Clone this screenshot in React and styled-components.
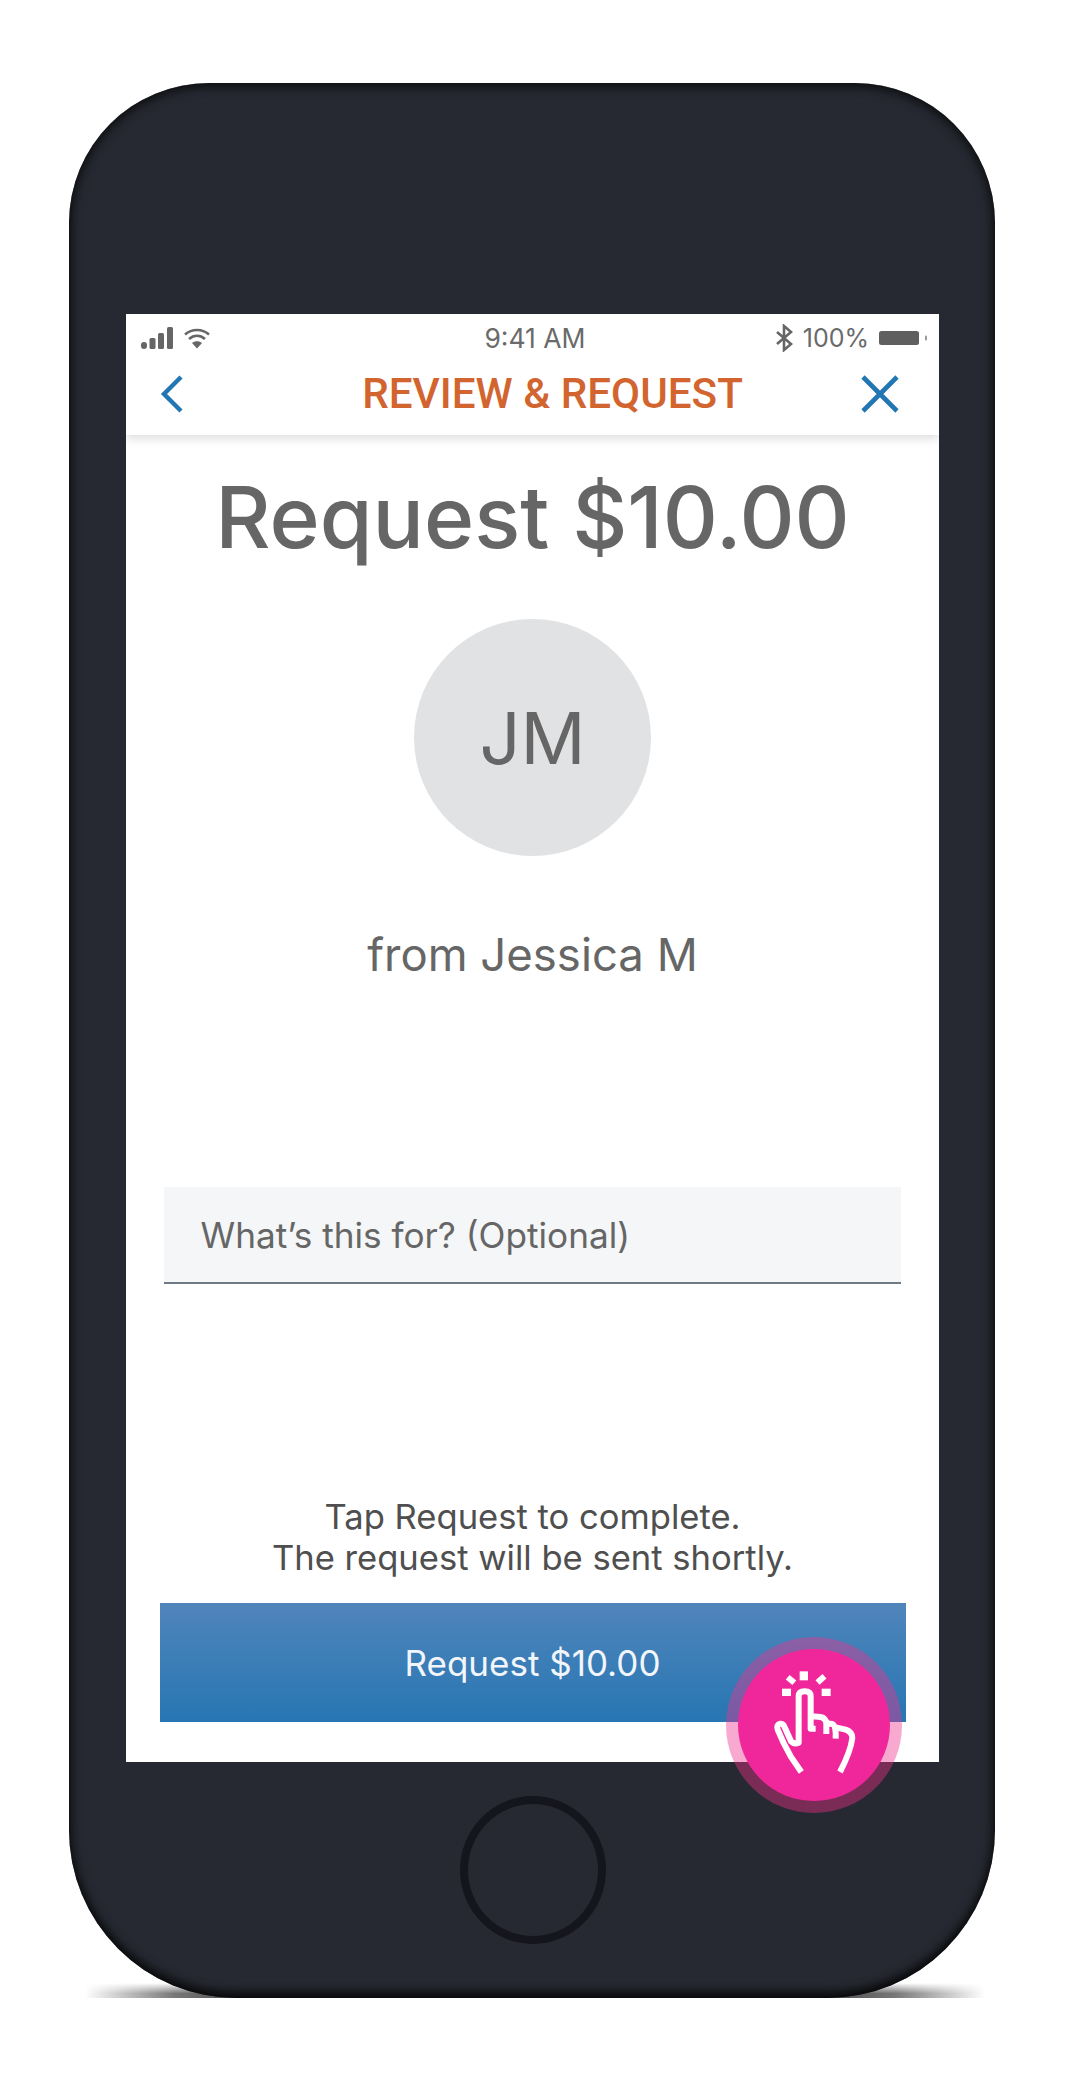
import React from "react";
import styled, { createGlobalStyle } from "styled-components";

const Global = createGlobalStyle`
  html, body { margin: 0; padding: 0; background: #fff; }
  body { font-family: Inter, Roboto, "Liberation Sans", sans-serif; }
`;

const Page = styled.div`
  width: 1071px;
  height: 2078px;
  padding: 83px 76px 0 69px;
  box-sizing: border-box;
  overflow: hidden;
`;

const Phone = styled.div`
  position: relative;
  width: 926px;
  height: 1915px;
  padding: 231px 56px 0 57px;
  box-sizing: border-box;
  display: flex;
  flex-direction: column;
  align-items: stretch;
  isolation: isolate;
  &::before {
    content: "";
    position: absolute;
    inset: 0;
    z-index: -1;
    background: #262931;
    border-radius: 140px 140px 168px 168px;
    box-shadow: inset 0 0 12px 2px rgba(0, 0, 0, 0.5), inset 0 6px 10px -2px rgba(0, 0, 0, 0.35), inset 0 -8px 10px -2px rgba(0, 0, 0, 0.6);
  }
  &::after {
    content: "";
    position: absolute;
    left: 16px;
    right: 10px;
    bottom: 0;
    height: 15px;
    z-index: -2;
    background: linear-gradient(90deg, rgba(90,90,90,0) 0, #777 10%, #333 22%, #333 78%, #777 90%, rgba(90,90,90,0) 100%);
    mask-image: linear-gradient(180deg, transparent 0, #000 70%);
  }
`;

const Screen = styled.div`
  flex: 0 0 1448px;
  background: #fff;
  display: flex;
  flex-direction: column;
  align-items: center;
  color: #666;
  overflow: hidden;
`;

const StatusBar = styled.div`
  position: relative;
  z-index: 1;
  align-self: stretch;
  height: 38px;
  padding: 10px 10px 0 15px;
  box-sizing: border-box;
  background: #fff;
  display: grid;
  grid-template-columns: 1fr auto 1fr;
  align-items: center;
  font-size: 25px;
  line-height: 28px;
  color: #6a6a6a;
`;

const StatusGroup = styled.div`
  display: flex;
  align-items: center;
  gap: ${(p) => p.$gap}px;
  justify-content: ${(p) => (p.$end ? "flex-end" : "flex-start")};
`;

const ClockText = styled.div`
  font-size: 26.5px;
`;

const NavBar = styled.div`
  align-self: stretch;
  height: 83px;
  padding: 0 40px 0 34px;
  box-sizing: border-box;
  display: flex;
  align-items: center;
  justify-content: space-between;
  box-shadow: 0 4px 9px rgba(0, 0, 0, 0.13);
`;

const NavTitle = styled.div`
  margin-left: 60px;
  font-family: Roboto, "Liberation Sans", sans-serif;
  font-size: 42.2px;
  font-weight: 500;
  color: #d2652f;
  white-space: nowrap;
`;

const Heading = styled.h1`
  margin: 33px 0 0;
  font-size: 85.5px;
  line-height: 98px;
  font-weight: 500;
  color: #666;
  white-space: nowrap;
`;

const Avatar = styled.div`
  margin-top: 53px;
  width: 237px;
  height: 237px;
  border-radius: 50%;
  background: #e1e2e3;
  display: flex;
  align-items: center;
  justify-content: center;
  font-size: 72px;
  color: #666;
`;

const FromName = styled.div`
  margin-top: 71px;
  font-size: 45.5px;
  line-height: 56px;
  color: #666;
`;

const InputField = styled.div`
  margin-top: 204px;
  width: 737px;
  height: 97px;
  margin-left: -1px;
  padding-left: 37px;
  box-sizing: border-box;
  background: #f5f6f7;
  border-bottom: 2px solid #6f7a85;
  display: flex;
  align-items: center;
  font-size: 35.2px;
  color: #666;
`;

const Hint = styled.div`
  margin-top: 212px;
  text-align: center;
  font-size: 34.6px;
  line-height: 41px;
  color: #4f4f4f;
`;

const RequestButton = styled.div`
  margin-top: 25px;
  width: 746px;
  height: 119px;
  background: linear-gradient(180deg, #5085bb 0%, #2776b3 100%);
  display: flex;
  align-items: center;
  justify-content: center;
  font-size: 35px;
  color: #f2f6fa;
`;

const HomeButton = styled.div`
  margin: 34px auto 0;
  width: 146px;
  height: 148px;
  box-sizing: border-box;
  border: 8px solid #14151d;
  border-radius: 50%;
`;

const Fab = styled.div`
  position: absolute;
  left: 669px;
  top: 1566px;
  width: 152px;
  height: 152px;
  border-radius: 50%;
  background: #f0279a;
  box-shadow: 0 0 0 12px rgba(238, 50, 140, 0.42);
  display: flex;
  align-items: center;
  justify-content: center;
`;

const HandSvg = styled.svg`
  margin-top: -4px;
`;

const HandIcon = () => (
  <HandSvg width="90" height="110" viewBox="270 260 270 330" fill="none">
    <g stroke="#fff" strokeWidth="18" strokeLinejoin="round">
      <path d="M367 572 L335 525 Q312 485 296 445 Q291 430 304 427 Q314 426 318 440 L336 480 Q346 490 359 484 L359 345 Q359 330 377 330 Q395 330 395 345 L395 442 L410 442" />
      <path d="M398 405 L425 407 Q440 410 442 426 L442 458" />
      <path d="M442 426 L460 428 Q472 432 470 472" />
      <path d="M470 438 L500 445 Q520 452 520 470 Q515 510 483 572" />
    </g>
    <g fill="#fff">
      <rect x="323" y="287" width="26" height="18" transform="rotate(40 336 296)" />
      <rect x="362" y="270" width="25" height="27" />
      <rect x="412" y="285" width="28" height="18" transform="rotate(-42 426 294)" />
      <rect x="309" y="322" width="27" height="22" />
      <rect x="428" y="322" width="27" height="22" />
    </g>
  </HandSvg>
);

const SignalIcon = () => (
  <svg width="32" height="22" viewBox="0 0 32 22" fill="#666">
    <rect x="0" y="15" width="6" height="7" rx="3" />
    <rect x="8.5" y="11" width="6" height="11" rx="1.5" />
    <rect x="17" y="6" width="6" height="16" rx="1.5" />
    <rect x="26" y="0" width="6" height="22" rx="1.5" />
  </svg>
);

const WifiIcon = () => (
  <svg width="26" height="21" viewBox="0 0 26 21" fill="none" stroke="#666" strokeWidth="2.6">
    <path d="M1 6.5 C8 0.5 18 0.5 25 6.5" />
    <path d="M5 11 C10 6.8 16 6.8 21 11" />
    <path d="M13 20.5 L8 15 C11 12.8 15 12.8 18 15 Z" fill="#666" stroke="none" />
  </svg>
);

const BluetoothIcon = () => (
  <svg width="18" height="28" viewBox="0 0 18 28" fill="none" stroke="#666" strokeWidth="2.6" strokeLinejoin="miter">
    <path d="M2 8 L16 20 L9 26 L9 2 L16 8 L2 20" />
  </svg>
);

const BatteryIcon = () => (
  <svg width="50" height="16" viewBox="0 0 50 16" fill="#5f5f5f">
    <rect x="0" y="1" width="40" height="14" rx="2.5" />
    <rect x="46" y="5.5" width="2" height="5" rx="1" fill="#999" />
  </svg>
);

const BackIcon = () => (
  <svg width="24" height="38" viewBox="0 0 24 38" fill="none" stroke="#2176b3" strokeWidth="4.4">
    <path d="M21 2 L4 19 L21 36" />
  </svg>
);

const CloseIcon = () => (
  <svg width="38" height="38" viewBox="0 0 38 38" fill="none" stroke="#2176b3" strokeWidth="4.6">
    <path d="M2 2 L36 36 M36 2 L2 36" />
  </svg>
);

export default function App() {
  return (
    <Page>
      <Global />
      <Phone>
        <Screen>
          <StatusBar>
            <StatusGroup $gap={11}>
              <SignalIcon />
              <WifiIcon />
            </StatusGroup>
            <ClockText>9:41 AM</ClockText>
            <StatusGroup $gap={10} $end>
              <BluetoothIcon />
              <span>100%</span>
              <BatteryIcon />
            </StatusGroup>
          </StatusBar>
          <NavBar>
            <BackIcon />
            <NavTitle>REVIEW &amp; REQUEST</NavTitle>
            <CloseIcon />
          </NavBar>
          <Heading>Request $10.00</Heading>
          <Avatar>JM</Avatar>
          <FromName>from Jessica M</FromName>
          <InputField>What’s this for? (Optional)</InputField>
          <Hint>
            Tap Request to complete.
            <br />
            The request will be sent shortly.
          </Hint>
          <RequestButton>Request $10.00</RequestButton>
        </Screen>
        <HomeButton />
        <Fab>
          <HandIcon />
        </Fab>
      </Phone>
    </Page>
  );
}
